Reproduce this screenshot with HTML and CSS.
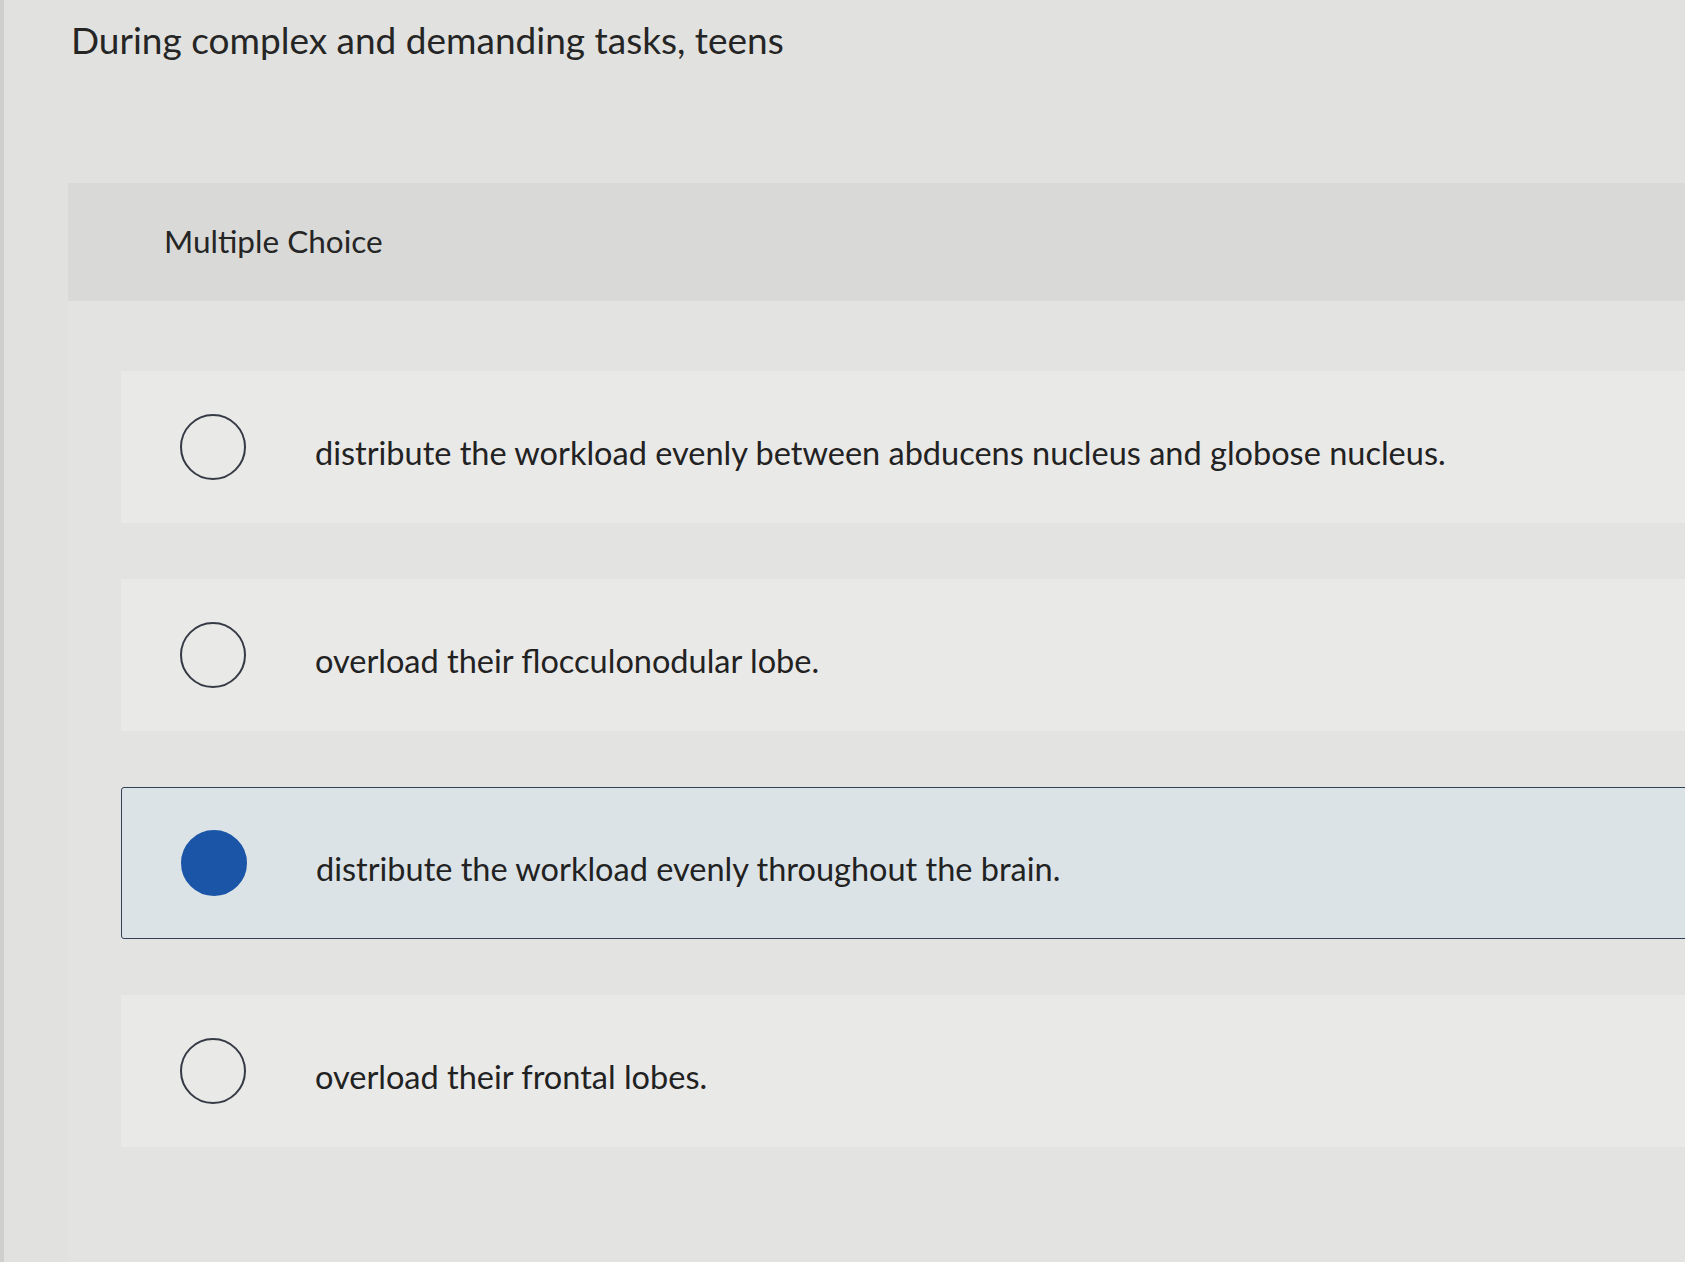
FILE: index.html
```html
<!DOCTYPE html>
<html lang="en">
<head>
<meta charset="utf-8">
<title>Multiple Choice</title>
<link rel="stylesheet" href="styles.css">
</head>
<body>
<div class="page">
  <h1 class="question">During complex and demanding tasks, teens</h1>
  <section class="panel">
    <div class="panel-head">Multiple Choice</div>
    <div class="options">
      <div class="option">
        <span class="radio"></span>
        <span class="label">distribute the workload evenly between abducens nucleus and globose nucleus.</span>
      </div>
      <div class="option">
        <span class="radio"></span>
        <span class="label">overload their flocculonodular lobe.</span>
      </div>
      <div class="option selected">
        <span class="radio"></span>
        <span class="label">distribute the workload evenly throughout the brain.</span>
      </div>
      <div class="option">
        <span class="radio"></span>
        <span class="label">overload their frontal lobes.</span>
      </div>
    </div>
  </section>
</div>
</body>
</html>
```
FILE: styles.css
```css
html, body {
  margin: 0;
  padding: 0;
}
body {
  width: 1685px;
  height: 1262px;
  overflow: hidden;
  background: #e1e1df;
  font-family: Lato, "Open Sans", "Liberation Sans", sans-serif;
  color: #222222;
}
.page {
  border-left: 4px solid #cfcfcd;
  height: 100%;
  box-sizing: border-box;
}
.question {
  margin: 0;
  padding: 18px 0 0 67px;
  height: 183px;
  box-sizing: border-box;
  font-size: 37px;
  font-weight: 400;
  line-height: 44px;
  color: #252525;
}
.panel {
  margin-left: 64px;
  margin-right: -30px;
  background: #e3e3e2;
  height: 1100px;
}
.panel-head {
  height: 118px;
  box-sizing: border-box;
  background: #d9d9d8;
  padding: 38px 0 0 96px;
  font-size: 31.5px;
  line-height: 40px;
  color: #252525;
}
.options {
  padding: 70px 0 0 53px;
  display: flex;
  flex-direction: column;
  gap: 56px;
}
.option {
  height: 152px;
  box-sizing: border-box;
  display: flex;
  align-items: center;
  background: #e9e9e8;
  padding-left: 59px;
}
.radio {
  flex: none;
  width: 66px;
  height: 66px;
  box-sizing: border-box;
  border: 2.5px solid #353a44;
  border-radius: 50%;
}
.label {
  margin-left: 69px;
  padding-top: 12px;
  font-size: 32.5px;
  line-height: 40px;
  color: #222222;
}
.option.selected {
  background: #dce3e7;
  border: 1.5px solid #33405a;
  border-radius: 3px;
}
.option.selected .radio {
  background: #1b55a8;
  border-color: #1b55a8;
}
```
